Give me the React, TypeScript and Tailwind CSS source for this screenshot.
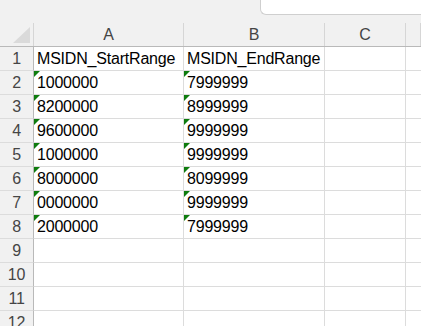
const COLS = ['A', 'B', 'C', ''];

const ROWS: [string, string][] = [
  ['MSIDN_StartRange', 'MSIDN_EndRange'],
  ['1000000', '7999999'],
  ['8200000', '8999999'],
  ['9600000', '9999999'],
  ['1000000', '9999999'],
  ['8000000', '8099999'],
  ['0000000', '9999999'],
  ['2000000', '7999999'],
  ['', ''],
  ['', ''],
  ['', ''],
  ['', ''],
];

const GRID = 'grid grid-cols-[34px_150px_141px_81px_1fr]';

function Flag() {
  return (
    <svg className="absolute left-0 top-0" width="6" height="6" viewBox="0 0 6 6">
      <polygon points="0,0 6,0 0,6" fill="#0e7c0e" />
    </svg>
  );
}

export default function App() {
  return (
    <div
      className="w-[421px] h-[326px] overflow-hidden bg-white text-[16px] tracking-[-0.2px]"
      style={{ fontFamily: '"Liberation Sans", Arial, sans-serif' }}
    >
      {/* Top strip with formula-box edge */}
      <div className="h-[23px] bg-[#f1f1f1] flex justify-end">
        <div className="w-[161px] h-[15px] bg-white border-l border-b border-[#cfcfcf] rounded-bl-[6px]" />
      </div>

      {/* Column headers */}
      <div className={`${GRID} h-[24px] bg-[#f1f1f1] border-b border-[#b9b9b9]`}>
        <div className="relative border-r border-[#d6d6d6]">
          <svg className="absolute left-[13px] top-[4px]" width="18" height="17" viewBox="0 0 18 17">
            <polygon points="17,0 17,16 0,16" fill="#dadada" />
          </svg>
        </div>
        {COLS.map((c, i) => (
          <div
            key={i}
            className="border-r border-[#d6d6d6] flex items-center justify-center text-[#444] leading-[23px]"
          >
            {c}
          </div>
        ))}
      </div>

      {/* Rows */}
      {ROWS.map(([a, b], i) => (
        <div key={i} className={`${GRID} h-[24px]`}>
          <div className="bg-[#f1f1f1] border-r border-b border-r-[#b9b9b9] border-b-[#dcdcdc] text-center text-[#454545] leading-[23px]">
            {i + 1}
          </div>
          <div className="relative border-r border-b border-[#dcdcdc] pl-[3px] leading-[23px] text-black whitespace-nowrap">
            {i > 0 && a && <Flag />}
            {a}
          </div>
          <div className="relative border-r border-b border-[#dcdcdc] pl-[3px] leading-[23px] text-black whitespace-nowrap">
            {i > 0 && b && <Flag />}
            {b}
          </div>
          <div className="border-r border-b border-[#dcdcdc]" />
          <div className="border-b border-[#dcdcdc]" />
        </div>
      ))}
    </div>
  );
}
